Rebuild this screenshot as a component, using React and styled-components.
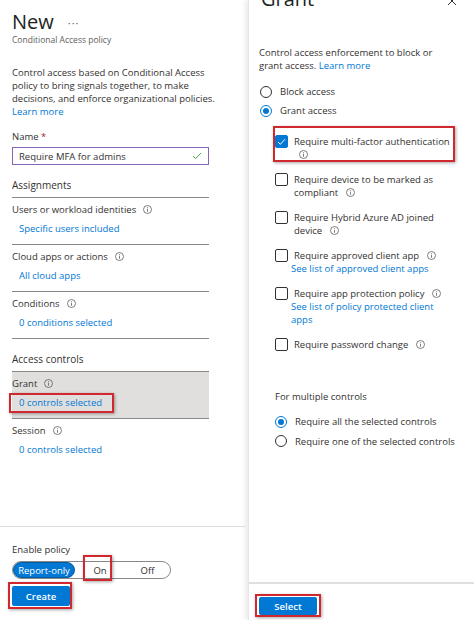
import React from 'react'
import styled, { createGlobalStyle } from 'styled-components';

const GlobalStyle = createGlobalStyle`
  html, body {
    margin: 0;
    padding: 0;
    background: #ffffff;
  }
  body {
    font-family: "Open Sans", "Noto Sans", sans-serif;
    color: #323130;
  }
`;

const InfoIcon = () => (
  <svg width="9" height="9" viewBox="0 0 9 9">
    <circle cx="4.5" cy="4.5" r="4" fill="none" stroke="#605e5c" strokeWidth="0.8" />
    <circle cx="4.5" cy="2.7" r="0.55" fill="#605e5c" />
    <line x1="4.5" y1="4" x2="4.5" y2="6.8" stroke="#605e5c" strokeWidth="0.8" />
  </svg>
);

const App = () => {
  return (
    <>
      <GlobalStyle />
      <Page>
        <LeftPanel>
          <LeftBody>
            <TitleRow>
              <Title>New</Title>
              <More>···</More>
            </TitleRow>
            <Subtitle>Conditional Access policy</Subtitle>

            <Paragraph $right={-16}>
              Control access based on Conditional Access policy to bring signals together, to make decisions, and enforce organizational policies.
              <br />
              <Link>Learn more</Link>
            </Paragraph>

            <FieldLabel>Name <Required>*</Required></FieldLabel>
            <InputBox>
              <span>Require MFA for admins</span>
              <svg width="10" height="8" viewBox="0 0 10 8">
                <path d="M1 4.2 L3.6 6.6 L9 1" fill="none" stroke="#3a9b3a" strokeWidth="0.9" />
              </svg>
            </InputBox>

            <SectionHeading>Assignments</SectionHeading>
            <Item>
              <ItemLabel>Users or workload identities <InfoIcon /></ItemLabel>
              <ItemLink>Specific users included</ItemLink>
            </Item>
            <Item>
              <ItemLabel>Cloud apps or actions <InfoIcon /></ItemLabel>
              <ItemLink>All cloud apps</ItemLink>
            </Item>
            <Item>
              <ItemLabel>Conditions <InfoIcon /></ItemLabel>
              <ItemLink>0 conditions selected</ItemLink>
            </Item>

            <SectionHeading>Access controls</SectionHeading>
            <Item $active>
              <ItemLabel>Grant <InfoIcon /></ItemLabel>
              <ItemLink>
                <Marked $inset="-3px -12px -4px -10px">0 controls selected</Marked>
              </ItemLink>
            </Item>
            <Item $last>
              <ItemLabel>Session <InfoIcon /></ItemLabel>
              <ItemLink>0 controls selected</ItemLink>
            </Item>
          </LeftBody>

          <LeftFooter>
            <FieldLabel $tight>Enable policy</FieldLabel>
            <Toggle>
              <Segment $selected $width={62}>Report-only</Segment>
              <Marked $inset="-7px 13px -3px 8px">
                <Segment $width={50}>On</Segment>
              </Marked>
              <Segment $width={45}>Off</Segment>
            </Toggle>
            <ButtonRow>
              <Marked $inset="-4px -2px -3px -4px">
                <PrimaryButton $height={20}>Create</PrimaryButton>
              </Marked>
            </ButtonRow>
          </LeftFooter>
        </LeftPanel>

        <RightPanel>
          <RightBody>
            <PanelHeader>
              <Title>Grant</Title>
              <svg width="10" height="10" viewBox="0 0 10 10">
                <path d="M1 1 L9 9 M9 1 L1 9" stroke="#323130" strokeWidth="1" />
              </svg>
            </PanelHeader>

            <Paragraph $top={35} $right={24}>
              Control access enforcement to block or grant access. <Link>Learn more</Link>
            </Paragraph>

            <RadioGroup $top={10}>
              <RadioRow><Radio /> Block access</RadioRow>
              <RadioRow><Radio $checked /> Grant access</RadioRow>
            </RadioGroup>

            <CheckList>
              <Marked $inset="-9px -1px -1px -2px" $block>
                <CheckRow>
                  <Checkbox $checked>
                    <svg width="9" height="8" viewBox="0 0 9 8">
                      <path d="M1 4 L3.4 6.3 L8 1.2" fill="none" stroke="#fff" strokeWidth="1" />
                    </svg>
                  </Checkbox>
                  <CheckText>Require multi-factor authentication <InfoIcon /></CheckText>
                </CheckRow>
              </Marked>
              <CheckRow>
                <Checkbox />
                <CheckText>Require device to be marked as compliant <InfoIcon /></CheckText>
              </CheckRow>
              <CheckRow>
                <Checkbox />
                <CheckText>Require Hybrid Azure AD joined device <InfoIcon /></CheckText>
              </CheckRow>
              <CheckRow>
                <Checkbox />
                <CheckText>
                  Require approved client app <InfoIcon />
                  <SubLink>See list of approved client apps</SubLink>
                </CheckText>
              </CheckRow>
              <CheckRow>
                <Checkbox />
                <CheckText>
                  Require app protection policy <InfoIcon />
                  <SubLink>See list of policy protected client apps</SubLink>
                </CheckText>
              </CheckRow>
              <CheckRow>
                <Checkbox />
                <CheckText>Require password change <InfoIcon /></CheckText>
              </CheckRow>
            </CheckList>

            <MultiLabel>For multiple controls</MultiLabel>
            <RadioGroup $top={9} $indent={16} $rowHeight={19.5}>
              <RadioRow $gap={8}><Radio $checked /> Require all the selected controls</RadioRow>
              <RadioRow $gap={8}><Radio /> Require one of the selected controls</RadioRow>
            </RadioGroup>
          </RightBody>

          <RightFooter>
            <Marked $inset="-3px -4px -2px -4px">
              <PrimaryButton $height={18}>Select</PrimaryButton>
            </Marked>
          </RightFooter>
        </RightPanel>
      </Page>
    </>
  )
}

const Page = styled.div`
  display: flex;
  width: 474px;
  height: 620px;
  overflow: hidden;
  font-size: 9.5px;
  line-height: 13px;
`;

const LeftPanel = styled.div`
  width: 245px;
  flex-shrink: 0;
  display: flex;
  flex-direction: column;
`;

const LeftBody = styled.div`
  flex: 1;
  padding: 10px 36px 0 12px;
`;

const TitleRow = styled.div`
  display: flex;
  align-items: center;
  gap: 14px;
`;

const Title = styled.h1`
  margin: 0;
  font-size: 20px;
  line-height: 24px;
  font-weight: 400;
  color: #201f1e;
`;

const More = styled.span`
  font-size: 11px;
  color: #605e5c;
  letter-spacing: 1px;
`;

const Subtitle = styled.div`
  font-size: 8.5px;
  line-height: 12px;
  color: #605e5c;
`;

const Paragraph = styled.p`
  margin: ${p => p.$top ?? 20}px ${p => p.$right ?? 0}px 0 0;
  line-height: 13px;
`;

const Link = styled.span`
  color: #0078d4;
`;

const FieldLabel = styled.div`
  margin-top: ${p => p.$tight ? 0 : 12}px;
`;

const Required = styled.span`
  color: #a4262c;
`;

const InputBox = styled.div`
  margin-top: 4px;
  height: 18px;
  box-sizing: border-box;
  border: 1px solid #8764b8;
  display: flex;
  align-items: center;
  justify-content: space-between;
  padding: 0 6px;
`;

const SectionHeading = styled.div`
  margin-top: 13px;
  font-size: 10px;
  line-height: 14px;
  padding-bottom: 5px;
  border-bottom: 1px solid #8a8886;
`;

const Item = styled.div`
  padding: 5px 0 9px;
  border-bottom: ${p => p.$last ? 'none' : '1px solid #8a8886'};
  background: ${p => p.$active ? '#e1dfdd' : 'transparent'};
`;

const ItemLabel = styled.div`
  display: flex;
  align-items: center;
  gap: 7px;
`;

const ItemLink = styled.div`
  margin-top: 6px;
  padding-left: 7px;
  color: #0078d4;
`;

const Marked = styled.span`
  position: relative;
  display: ${p => p.$block ? 'block' : 'inline-block'};

  &::after {
    content: '';
    position: absolute;
    inset: ${p => p.$inset};
    border: 2px solid #d0282e;
    box-shadow: 1px 1px 3px rgba(0, 0, 0, 0.35);
    pointer-events: none;
  }
`;

const LeftFooter = styled.div`
  border-top: 1px solid #e1dfdd;
  padding: 16px 12px 14px;
`;

const Toggle = styled.div`
  margin-top: 5px;
  width: 159px;
  height: 18px;
  box-sizing: border-box;
  border: 1px solid #8a8886;
  border-radius: 9px;
  display: flex;
  align-items: center;
`;

const Segment = styled.div`
  width: ${p => p.$width}px;
  height: 16px;
  display: flex;
  align-items: center;
  justify-content: center;
  border-radius: 8px;
  background: ${p => p.$selected ? '#0078d4' : 'transparent'};
  color: ${p => p.$selected ? '#ffffff' : '#323130'};
  border: ${p => p.$selected ? '1px solid #005a9e' : 'none'};
  box-sizing: border-box;
`;

const ButtonRow = styled.div`
  margin-top: 7px;
`;

const PrimaryButton = styled.button`
  display: block;
  width: 58px;
  height: ${p => p.$height}px;
  border: none;
  border-radius: 2px;
  background: #0078d4;
  color: #ffffff;
  font-family: inherit;
  font-size: 9.5px;
  font-weight: 600;
  padding: 0;
`;

const RightPanel = styled.div`
  flex: 1;
  display: flex;
  flex-direction: column;
  border-left: 1px solid #e8e6e4;
  box-shadow: -3px 0 4px rgba(0, 0, 0, 0.08);
  margin-left: 3px;
`;

const RightBody = styled.div`
  flex: 1;
  padding: 0 14px 0 10px;
`;

const PanelHeader = styled.div`
  margin-top: -13px;
  padding-left: 2px;
  display: flex;
  justify-content: space-between;
  align-items: flex-end;

  svg {
    margin-bottom: 5px;
    margin-right: 3px;
  }
`;

const RadioGroup = styled.div`
  margin-top: ${p => p.$top}px;
  padding-left: ${p => p.$indent ?? 1}px;
  white-space: nowrap;

  & > div {
    height: ${p => p.$rowHeight ?? 19}px;
  }
`;

const RadioRow = styled.div`
  display: flex;
  align-items: center;
  gap: ${p => p.$gap ?? 8}px;
`;

const Radio = styled.span`
  width: 12px;
  height: 12px;
  flex-shrink: 0;
  box-sizing: border-box;
  border-radius: 50%;
  border: 1px solid ${p => p.$checked ? '#0078d4' : '#323130'};
  display: flex;
  align-items: center;
  justify-content: center;

  &::after {
    content: '';
    width: 6px;
    height: 6px;
    border-radius: 50%;
    background: ${p => p.$checked ? '#0078d4' : 'transparent'};
  }
`;

const CheckList = styled.div`
  margin-top: 15px;
  padding-left: 16px;
  padding-right: 6px;
  display: flex;
  flex-direction: column;
  gap: 12px;
`;

const CheckRow = styled.div`
  display: flex;
  align-items: flex-start;
  gap: 6px;
`;

const Checkbox = styled.span`
  width: 13px;
  height: 13px;
  flex-shrink: 0;
  box-sizing: border-box;
  border-radius: 2px;
  border: 1px solid ${p => p.$checked ? '#0078d4' : '#323130'};
  background: ${p => p.$checked ? '#0078d4' : '#ffffff'};
  display: flex;
  align-items: center;
  justify-content: center;
`;

const CheckText = styled.div`
  flex: 1;

  svg {
    margin-left: 5px;
    vertical-align: -1px;
  }
`;

const SubLink = styled.div`
  color: #0078d4;
  margin-left: -3px;
`;

const MultiLabel = styled.div`
  margin-top: 39px;
  padding-left: 16px;
`;

const RightFooter = styled.div`
  border-top: 2px solid #e1dfdd;
  padding: 13px 10px 5px;
`;

export default App;
